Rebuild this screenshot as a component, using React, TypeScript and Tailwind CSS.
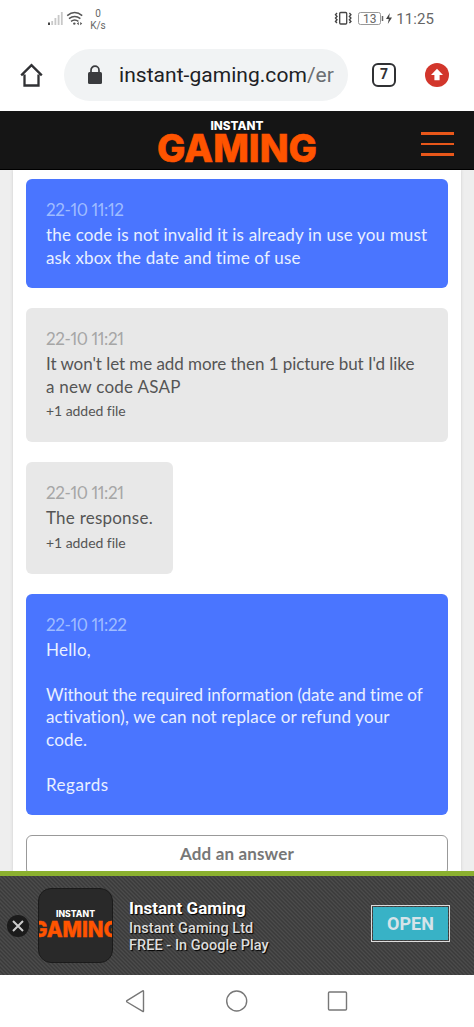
import { clsx } from "clsx";

interface Line {
    text: string;
    tracking?: string;
}

interface MessageProps {
    date: string;
    lines: Line[];
    file?: string;
    support?: boolean;
    className?: string;
}

function Message({ date, lines, file, support, className }: MessageProps) {
    return (
        <div className={clsx("shrink-0 rounded-[6px] px-5 pt-5 font-[Lato,sans-serif] whitespace-pre", support ? "bg-[#4a75ff] text-[#e9f0ff]" : "bg-[#e8e8e8] text-[#555]", className)}>
            <p className={clsx("mb-[2.8px] text-[17px] leading-[22.4px] tracking-[-0.4px] proportional-nums", support ? "text-[#9fbcff]" : "text-[#a6a6a6]")}>{date}</p>
            {lines.map((line, i) => (
                <p key={i} className={clsx("h-[22.4px] text-[17px] leading-[22.4px]", line.tracking)}>{line.text}</p>
            ))}
            {file && <p className="mt-[2px] text-[14px] leading-[22.4px] tracking-[-0.05px]">{file}</p>}
        </div>
    );
}

function StatusBar() {
    return (
        <div className="flex h-[38px] items-start justify-between pr-10 pl-12 font-[Roboto,sans-serif] text-[#666]">
            <div className="flex pt-[8px]">
                <svg width="36" height="20" viewBox="48 8 36 20" fill="none">
                    <rect x="48" y="22.5" width="2" height="2.5" fill="#444" />
                    <path d="M52.2 25v-4M55.4 25v-7M58.6 25v-10M61.8 25v-13" stroke="#c8c8c8" strokeWidth="1.8" />
                    <path d="M67.2 15.6q7.5-6 15 0M69 18.6q5.7-4.4 11.4 0M71 21.4q3.7-2.7 7.4 0" stroke="#555" strokeWidth="1.5" />
                    <circle cx="74.3" cy="23.6" r="1.2" fill="#555" />
                    <path d="M78.8 21.9l-2 1.7 2 1.7zM80.2 21.9l2 1.7-2 1.7z" fill="#555" />
                </svg>
                <div className="ml-[6px] w-[16px] text-center text-[10px] leading-[12px] whitespace-nowrap">
                    <p>0</p>
                    <p>K/s</p>
                </div>
            </div>
            <div className="flex items-center pt-[10px]">
                <svg width="62" height="18" viewBox="335 10 62 18" fill="none" stroke="#666">
                    <rect x="340.7" y="12.5" width="7" height="11.5" rx="1" stroke="#444" strokeWidth="1.3" />
                    <path d="M338 13l-1.5 1.7 1.5 1.7-1.5 1.7 1.5 1.7-1.5 1.7 1.5 1.5M350.4 13l1.5 1.7-1.5 1.7 1.5 1.7-1.5 1.7 1.5 1.7-1.5 1.5" stroke="#444" strokeWidth="1.4" />
                    <rect x="359.5" y="12.5" width="22" height="12" rx="2" stroke="#999" />
                    <path d="M383.5 16v5" strokeWidth="1.5" />
                    <path d="M390.8 13l-3.8 6h2.8l-1 5 4.2-6.5h-2.9z" fill="#444" stroke="none" />
                    <text x="364" y="22.8" fill="#666" stroke="none" fontSize="12" textLength="13.5">13</text>
                </svg>
                <span className="text-[15px] leading-[18px] tracking-[0.1px]">11:25</span>
            </div>
        </div>
    );
}

function AddressBar() {
    return (
        <div className="flex h-[73px] items-center pl-5 font-[Roboto,sans-serif]">
            <svg width="24" height="26" viewBox="0 0 24 26" fill="none" stroke="#303134" strokeWidth="2.3">
                <path d="M4.5 12.5v11h14v-11M1.2 13.4L11.5 3.2l10.3 10.2" />
            </svg>
            <div className="ml-5 flex h-[52px] w-[284px] items-center rounded-full bg-[#f1f3f4] pl-[23px]">
                <svg width="16" height="20" viewBox="0 0 16 20">
                    <rect x="1" y="7" width="14" height="12" rx="1.5" fill="#3a3b3e" />
                    <path d="M4 8V5.2a4 4 0 0 1 8 0V8" fill="none" stroke="#3a3b3e" strokeWidth="1.7" />
                </svg>
                <p className="ml-4 pt-px text-[21px] leading-[26px] tracking-[0.04px] whitespace-nowrap text-[#202124]">instant-gaming.com<span className="text-[#6b6e72]">/er</span></p>
            </div>
            <div className="ml-6 flex size-6 items-center justify-center rounded-[6px] border-[2.4px] border-[#303134] text-[14px] font-bold text-[#303134]">7</div>
            <svg className="ml-[29px]" width="24" height="24" viewBox="0 0 24 24">
                <circle cx="12" cy="12" r="12" fill="#d2362c" />
                <path d="M12 5.7l6 6.2h-3.4v5.4H9.4v-5.4H6z" fill="#fff" />
            </svg>
        </div>
    );
}

function Header() {
    return (
        <header className="flex h-[59px] shrink-0 items-center justify-between border-b border-black bg-[#151515] pr-5 pl-[158px]">
            <svg width="160" height="58" viewBox="158 111 160 58" className="overflow-visible font-[Inter,sans-serif] font-extrabold">
                <text x="210.5" y="130" fill="#fff" fontSize="11.5" textLength="53" lengthAdjust="spacingAndGlyphs">INSTANT</text>
                <text x="157" y="161.5" fill="#ff5400" stroke="#ff5400" strokeWidth="0.6" fontSize="38" textLength="160" lengthAdjust="spacingAndGlyphs">GAMING</text>
            </svg>
            <div className="flex flex-col gap-[8px] pt-[8px]">
                <span className="h-[2.5px] w-[33px] bg-[#e8571a]" />
                <span className="h-[2.5px] w-[33px] bg-[#e8571a]" />
                <span className="h-[2.5px] w-[33px] bg-[#e8571a]" />
            </div>
        </header>
    );
}

function AppBanner() {
    return (
        <div className="flex h-[104px] shrink-0 items-center border-t-[5px] border-[#8bb02f] bg-[#404040] bg-[repeating-linear-gradient(45deg,#3a3a3a_0px,#4c4c4c_1.414px,#3a3a3a_2.828px)] pl-[7px] font-[Roboto,sans-serif]">
            <svg width="22" height="22" viewBox="0 0 22 22">
                <circle cx="11" cy="11" r="11" fill="#1b1b1b" />
                <path d="M6 6l10 10M16 6L6 16" stroke="#ccc" strokeWidth="2" />
            </svg>
            <div className="ml-[9px] size-[75px] overflow-hidden rounded-[13px] border border-[#1b1b1b] bg-[#292929]">
                <svg width="73" height="73" viewBox="39 889 73 73" className="font-[Inter,sans-serif] font-extrabold">
                    <text x="56" y="917" fill="#fff" fontSize="9" textLength="39" lengthAdjust="spacingAndGlyphs">INSTANT</text>
                    <text x="32" y="936.5" fill="#ff5400" stroke="#ff5400" strokeWidth="0.4" fontSize="21" textLength="87" lengthAdjust="spacingAndGlyphs">GAMING</text>
                </svg>
            </div>
            <div className="ml-4 w-[242px] pt-px font-medium text-[#ddd] [text-shadow:1px_1px_1px_#000]">
                <p className="mb-[2px] text-[17px] leading-5 font-bold text-white">Instant Gaming</p>
                <p className="text-[14.5px] leading-[17px] tracking-[0.04px]">Instant Gaming Ltd</p>
                <p className="text-[14.5px] leading-[17px] tracking-[0.04px]">FREE - In Google Play</p>
            </div>
            <div className="-mt-1 border border-[#ddd] p-px">
                <div className="flex h-[33px] w-[75px] items-center justify-center bg-[#38b2c6] text-[18px] font-bold text-[#d5e3e9]">OPEN</div>
            </div>
        </div>
    );
}

function NavBar() {
    return (
        <div className="flex h-[52px] items-center justify-center bg-white">
            <svg width="230" height="24" viewBox="122 989 230 24" fill="none" stroke="#777" strokeWidth="1.4">
                <path d="M143.5 991.5v19.5q0 .8-.8.4L127 1002q-.8-.7 0-1.4l15.7-9.7q.8-.3.8.6z" />
                <circle cx="236.7" cy="1001" r="10" />
                <rect x="328.5" y="992" width="18" height="18" rx="1" />
            </svg>
        </div>
    );
}

export default function App() {
    return (
        <div className="flex h-[1027px] w-[474px] flex-col overflow-hidden bg-white">
            <StatusBar />
            <AddressBar />
            <Header />
            <main className="h-[701px] shrink-0 overflow-hidden bg-[#eee] px-[13px]">
                <div className="flex h-full flex-col items-start bg-white px-[13px] pt-[9px] shadow-[0_0_3px_#ccc]">
                    <Message
                        support
                        className="h-[109px] w-[422px]"
                        date="22-10 11:12"
                        lines={[
                            { text: "the code is not invalid it is already in use you must", tracking: "tracking-[0.18px]" },
                            { text: "ask xbox the date and time of use", tracking: "tracking-[0.15px]" },
                        ]}
                    />
                    <Message
                        className="mt-5 h-[134px] w-[422px]"
                        date="22-10 11:21"
                        lines={[
                            { text: "It won't let me add more then 1 picture but I'd like", tracking: "tracking-[-0.06px]" },
                            { text: "a new code ASAP", tracking: "tracking-[0.27px]" },
                        ]}
                        file="+1 added file"
                    />
                    <Message className="mt-5 h-[112px] w-[147px]" date="22-10 11:21" lines={[{ text: "The response.", tracking: "tracking-[0.23px]" }]} file="+1 added file" />
                    <Message
                        support
                        className="mt-5 h-[221px] w-[422px]"
                        date="22-10 11:22"
                        lines={[
                            { text: "Hello,", tracking: "tracking-[0.3px]" },
                            { text: "" },
                            { text: "Without the required information (date and time of", tracking: "tracking-[-0.05px]" },
                            { text: "activation), we can not replace or refund your", tracking: "tracking-[0.16px]" },
                            { text: "code.", tracking: "tracking-[0.2px]" },
                            { text: "" },
                            { text: "Regards", tracking: "tracking-[0.5px]" },
                        ]}
                    />
                    <button className="mt-5 h-[40px] w-[422px] shrink-0 rounded-[6px] border border-[#999] pb-[3px] font-[Lato,sans-serif] text-[17px] font-bold tracking-[0.15px] text-[#777]">Add an answer</button>
                </div>
            </main>
            <AppBanner />
            <NavBar />
        </div>
    );
}
